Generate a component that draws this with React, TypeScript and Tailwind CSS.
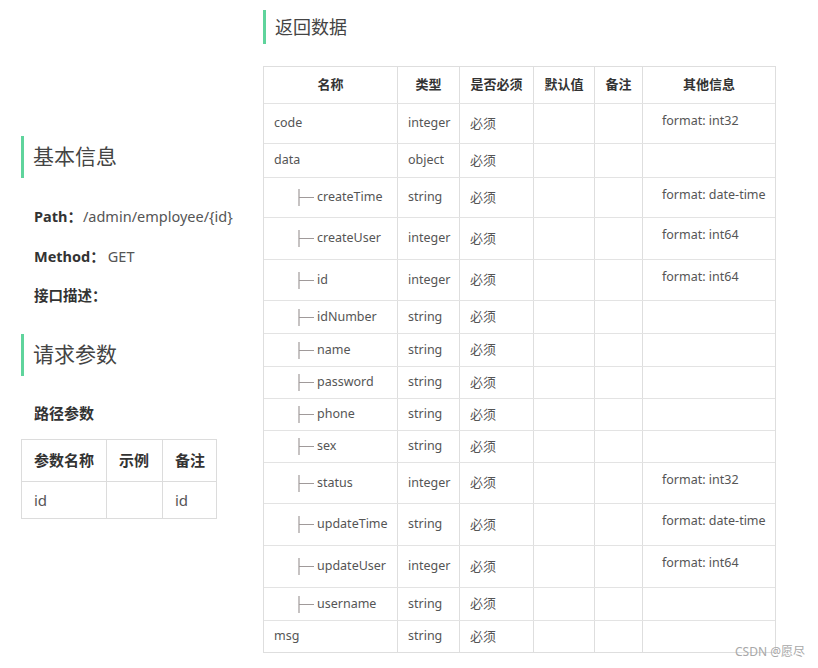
const font = "font-['Noto_Sans','Noto_Sans_CJK_SC',sans-serif]";

type Row = {
  name: string;
  type: string;
  child?: boolean;
  format?: string;
  h: string;
};

const rows: Row[] = [
  { name: "code", type: "integer", format: "format: int32", h: "h-[40px]" },
  { name: "data", type: "object", h: "h-[34px]" },
  { name: "createTime", type: "string", child: true, format: "format: date-time", h: "h-[40px]" },
  { name: "createUser", type: "integer", child: true, format: "format: int64", h: "h-[42px]" },
  { name: "id", type: "integer", child: true, format: "format: int64", h: "h-[41px]" },
  { name: "idNumber", type: "string", child: true, h: "h-[33px]" },
  { name: "name", type: "string", child: true, h: "h-[33px]" },
  { name: "password", type: "string", child: true, h: "h-[32px]" },
  { name: "phone", type: "string", child: true, h: "h-[32px]" },
  { name: "sex", type: "string", child: true, h: "h-[32px]" },
  { name: "status", type: "integer", child: true, format: "format: int32", h: "h-[41px]" },
  { name: "updateTime", type: "string", child: true, format: "format: date-time", h: "h-[42px]" },
  { name: "updateUser", type: "integer", child: true, format: "format: int64", h: "h-[42px]" },
  { name: "username", type: "string", child: true, h: "h-[33px]" },
  { name: "msg", type: "string", h: "h-[31px]" },
];

function TreeMark() {
  return (
    <svg width="17" height="17" viewBox="0 0 17 17" className="mr-[2px] shrink-0">
      <line x1="1" y1="0" x2="1" y2="17" stroke="#a09a9a" strokeWidth="1.2" />
      <line x1="1" y1="8.5" x2="16" y2="8.5" stroke="#a09a9a" strokeWidth="1" />
    </svg>
  );
}

function Heading({ text, size }: { text: string; size: string }) {
  return (
    <div className={`flex items-center border-l-[3px] border-[#5fd49c] pl-[9px] text-[#444] ${size}`}>
      {text}
    </div>
  );
}

export default function App() {
  return (
    <div className={`relative flex h-[668px] w-[818px] bg-white ${font}`}>
      {/* 左侧：基本信息 / 请求参数 */}
      <div className="w-[263px] shrink-0 pl-[21px] pt-[136px]">
        <Heading text="基本信息" size="h-[42px] text-[21px]" />

        <div className="mt-[28px] pl-[13px] text-[14.5px] leading-[20px] text-[#555]">
          <div className="flex">
            <span className="font-bold text-[#333]">Path：</span>
            <span className="ml-[1px]">/admin/employee/{"{id}"}</span>
          </div>
          <div className="mt-[20px] flex">
            <span className="font-bold text-[#333]">Method：</span>
            <span className="ml-[3px]">GET</span>
          </div>
          <div className="mt-[19px] font-bold text-[#333]">接口描述：</div>
        </div>

        <div className="mt-[29px]">
          <Heading text="请求参数" size="h-[42px] text-[21px]" />
        </div>

        <div className="mt-[27px] pl-[13px] text-[15px] font-bold leading-[20px] text-[#333]">
          路径参数
        </div>

        <div className="mt-[16px] w-[196px] border border-[#dcdcdc] text-[15px] text-[#555]">
          <div className="flex h-[42px] border-b border-[#dcdcdc] font-bold text-[#333]">
            <div className="flex w-[85px] items-center border-r border-[#dcdcdc] pl-[12px]">参数名称</div>
            <div className="flex w-[56px] items-center border-r border-[#dcdcdc] pl-[12px]">示例</div>
            <div className="flex flex-1 items-center pl-[12px]">备注</div>
          </div>
          <div className="flex h-[36px]">
            <div className="flex w-[85px] items-center border-r border-[#dcdcdc] pl-[12px]">id</div>
            <div className="w-[56px] border-r border-[#dcdcdc]" />
            <div className="flex flex-1 items-center pl-[12px]">id</div>
          </div>
        </div>
      </div>

      {/* 右侧：返回数据 */}
      <div className="w-[513px] shrink-0 pt-[10px]">
        <Heading text="返回数据" size="h-[34px] text-[18px]" />

        <div className="mt-[22px] border border-[#dedede] text-[12.5px] text-[#555]">
          <div className="flex h-[37px] border-b border-[#e3e3e3] text-[13px] font-bold text-[#333]">
            <div className="flex w-[134px] items-center justify-center border-r border-[#dedede]">名称</div>
            <div className="flex w-[62px] items-center justify-center border-r border-[#dedede]">类型</div>
            <div className="flex w-[74px] items-center justify-center border-r border-[#dedede]">是否必须</div>
            <div className="flex w-[61px] items-center justify-center border-r border-[#dedede]">默认值</div>
            <div className="flex w-[48px] items-center justify-center border-r border-[#dedede]">备注</div>
            <div className="flex flex-1 items-center justify-center">其他信息</div>
          </div>

          {rows.map((r, i) => (
            <div
              key={r.name}
              className={`flex ${r.h} ${i < rows.length - 1 ? "border-b border-[#e3e3e3]" : ""}`}
            >
              <div className="flex w-[134px] items-center border-r border-[#dedede] pl-[10px]">
                {r.child && <span className="w-[24px] shrink-0" />}
                {r.child && <TreeMark />}
                <span>{r.name}</span>
              </div>
              <div className="flex w-[62px] items-center border-r border-[#dedede] pl-[10px]">{r.type}</div>
              <div className="flex w-[74px] items-center border-r border-[#dedede] pl-[10px] text-[13px]">必须</div>
              <div className="w-[61px] border-r border-[#dedede]" />
              <div className="w-[48px] border-r border-[#dedede]" />
              <div className="flex-1 pl-[19px] pt-[8px] leading-[17px]">{r.format}</div>
            </div>
          ))}
        </div>
      </div>

      {/* 水印 */}
      <div className="absolute left-[735px] top-[644px] text-[12px] leading-[16px] text-[#a8a8a8]">
        CSDN @愿尽
      </div>
    </div>
  );
}
